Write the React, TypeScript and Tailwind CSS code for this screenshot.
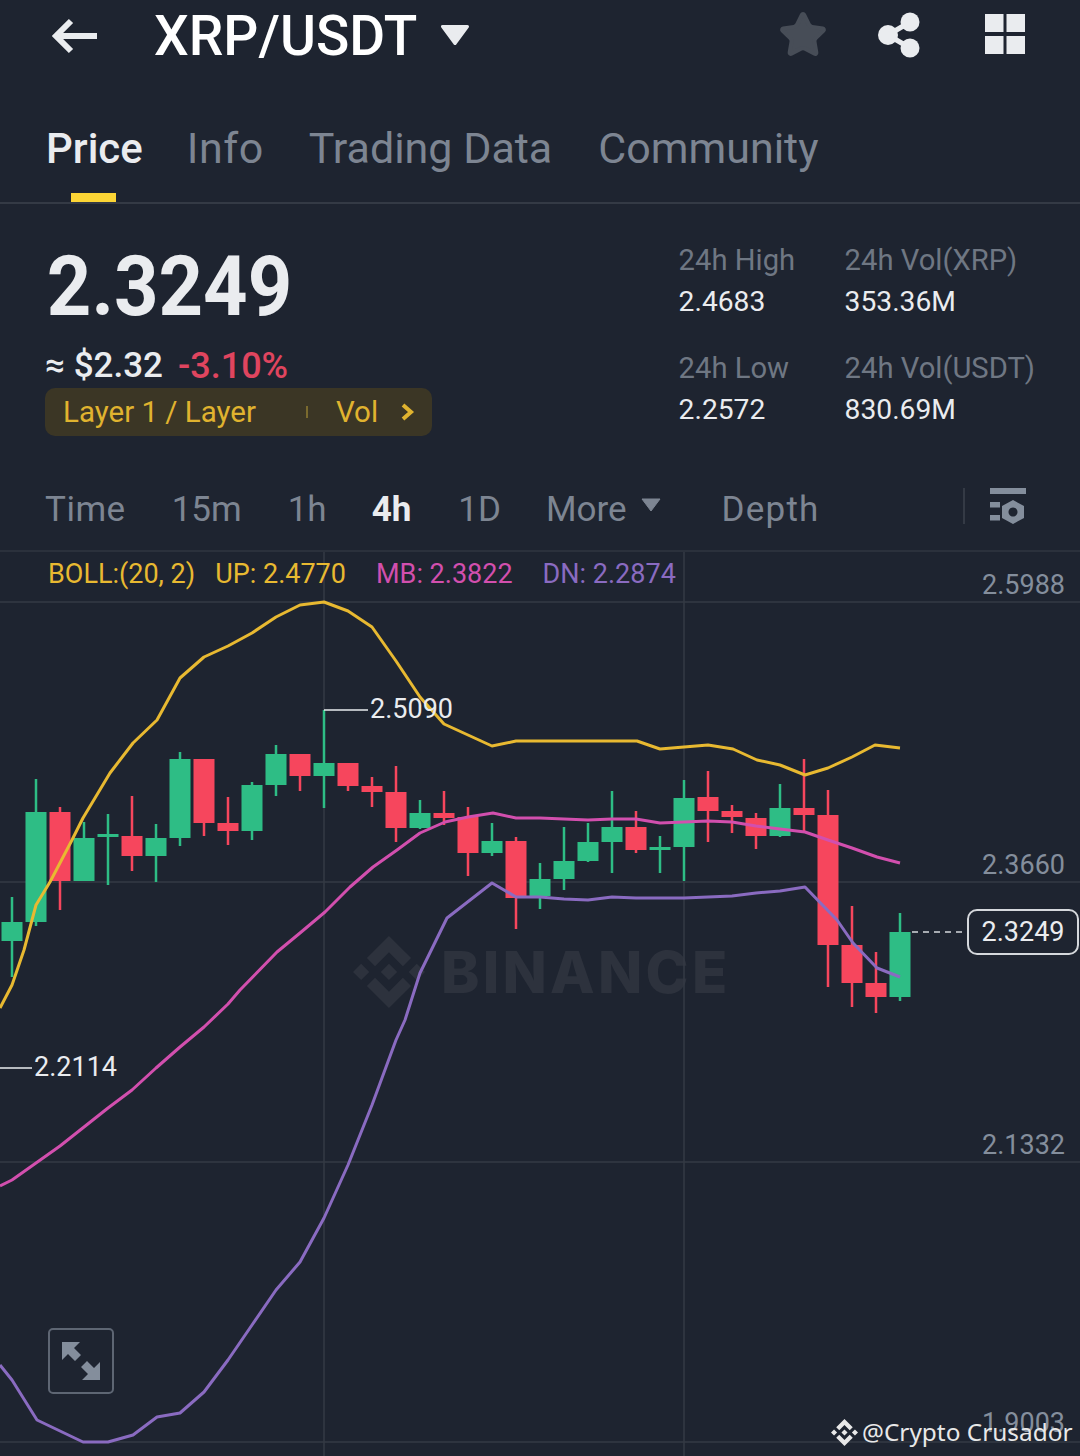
import React from 'react';
import { Star } from 'lucide-react';
import { SiBinance } from 'react-icons/si';

// [x, wickTop, wickBottom, bodyTop, bodyBottom, isUp]
type Candle = [number, number, number, number, number, boolean];

const candles: Candle[] = [
    [12, 897, 977, 922, 941, true],
    [36, 779, 926, 812, 922, true],
    [60, 807, 910, 812, 881, false],
    [84, 822, 881, 838, 881, true],
    [108, 814, 885, 834, 837, true],
    [132, 796, 871, 836, 856, false],
    [156, 824, 882, 838, 856, true],
    [180, 752, 846, 759, 838, true],
    [204, 759, 836, 759, 823, false],
    [228, 797, 845, 823, 831, false],
    [252, 782, 840, 785, 831, true],
    [276, 745, 796, 754, 785, true],
    [300, 754, 791, 754, 776, false],
    [324, 710, 808, 763, 776, true],
    [348, 763, 791, 763, 786, false],
    [372, 777, 807, 786, 792, false],
    [396, 766, 842, 792, 828, false],
    [420, 800, 829, 813, 828, true],
    [444, 791, 825, 813, 818, false],
    [468, 807, 876, 817, 853, false],
    [492, 823, 856, 841, 853, true],
    [516, 837, 929, 841, 898, false],
    [540, 863, 909, 879, 896, true],
    [564, 827, 890, 861, 879, true],
    [588, 823, 862, 842, 861, true],
    [612, 791, 873, 827, 842, true],
    [636, 811, 853, 827, 850, false],
    [660, 836, 873, 847, 850, true],
    [684, 780, 881, 798, 847, true],
    [708, 771, 842, 797, 811, false],
    [732, 805, 833, 811, 817, false],
    [756, 813, 849, 818, 836, false],
    [780, 784, 837, 808, 836, true],
    [804, 759, 833, 808, 815, false],
    [828, 790, 987, 815, 945, false],
    [852, 906, 1007, 945, 983, false],
    [876, 952, 1013, 983, 997, false],
    [900, 913, 1001, 932, 997, true],
];

const upLine = '0,1008 12,985 24,950 36,905 50,882 72,840 83,818 110,773 133,743 157,720 180,678 204,657 228,646 252,633 276,617 300,605 324,602 348,611 372,627 396,661 420,697 444,724 468,735 492,746 516,741 540,741 588,741 637,741 660,749 684,747 708,745 733,749 757,760 780,765 805,775 828,768 852,757 875,745 900,748';
const midLine = '0,1186 12,1180 36,1163 60,1146 84,1127 108,1108 132,1090 156,1068 180,1047 204,1027 228,1004 240,990 277,952 300,933 325,912 350,887 373,867 397,850 420,833 445,822 468,817 493,813 516,818 540,818 564,819 588,820 612,819 636,819 660,823 684,822 708,821 732,822 756,826 780,829 805,832 828,840 852,848 877,857 900,863';
const lowLine = '0,1365 12,1380 37,1420 83,1442 108,1442 133,1435 157,1417 180,1413 204,1392 228,1360 252,1325 276,1290 300,1262 324,1218 348,1165 372,1105 396,1040 405,1020 420,973 447,918 492,883 516,897 540,897 564,899 588,900 612,897 636,898 684,898 708,897 732,896 756,893 780,891 805,887 837,920 853,943 877,968 900,977';

function ChartDrawing() {
    return (
        <svg viewBox="0 552 1080 904" className="absolute inset-0 h-full w-full">
            {[602, 882, 1162, 1442].map((y) => (
                <line key={y} x1="0" x2="1080" y1={y} y2={y} stroke="#343a45" strokeWidth="1.5" />
            ))}
            {[324, 684].map((x) => (
                <line key={x} x1={x} x2={x} y1="552" y2="1456" stroke="#343a45" strokeWidth="1.5" />
            ))}
            {candles.map(([x, wickTop, wickBottom, bodyTop, bodyBottom, isUp]) => {
                const color = isUp ? '#2ebd85' : '#f6465d';
                return (
                    <g key={x}>
                        <rect x={x - 1.25} y={wickTop} width="2.5" height={wickBottom - wickTop} fill={color} />
                        <rect x={x - 10.5} y={bodyTop} width="21" height={bodyBottom - bodyTop} fill={color} />
                    </g>
                );
            })}
            <polyline points={upLine} fill="none" stroke="#e8b931" strokeWidth="3" strokeLinejoin="round" />
            <polyline points={midLine} fill="none" stroke="#d24fae" strokeWidth="3" strokeLinejoin="round" />
            <polyline points={lowLine} fill="none" stroke="#8a6bc1" strokeWidth="3" strokeLinejoin="round" />
            {/* price markers */}
            <polyline points="324,710 368,710" fill="none" stroke="#eaecef" strokeWidth="1.5" />
            <polyline points="0,1068 32,1068" fill="none" stroke="#eaecef" strokeWidth="1.5" />
            <line x1="912" x2="966" y1="932" y2="932" stroke="#d5d8dc" strokeWidth="1.5" strokeDasharray="6 5" />
        </svg>
    );
}

function ShareIcon() {
    return (
        <svg viewBox="0 0 44 46" className="h-[46px] w-[44px]" fill="#eaecef">
            <circle cx="11" cy="23" r="10" />
            <circle cx="33" cy="10" r="9.5" />
            <circle cx="33" cy="36" r="9.5" />
            <path d="M11 23 33 10M11 23 33 36" stroke="#eaecef" strokeWidth="5" />
        </svg>
    );
}

function GridIcon() {
    return (
        <svg viewBox="0 0 40 40" className="h-10 w-10" fill="#eaecef">
            <rect x="0" y="0" width="18.5" height="18" />
            <rect x="21.5" y="0" width="18.5" height="18" />
            <rect x="0" y="22" width="18.5" height="18" />
            <rect x="21.5" y="22" width="18.5" height="18" />
        </svg>
    );
}

function SettingsIcon() {
    return (
        <svg viewBox="0 0 36 36" className="h-9 w-9" fill="#848e9c">
            <rect x="0" y="0" width="36" height="6" />
            <rect x="0" y="14" width="10" height="5.5" />
            <rect x="0" y="27" width="10" height="5.5" />
            <path fillRule="evenodd" d="M23 12 34 18 34 30 23 36 12 30 12 18ZM23 19.5a4.5 4.5 0 1 0 .01 0Z" />
        </svg>
    );
}

function StatBlock({ label, value }: { label: string; value: string }) {
    return (
        <div className="flex flex-col">
            <span className="text-[29.2px] leading-[36px] text-[#6f7783]">{label}</span>
            <span className="mt-[6px] text-[28.2px] leading-[36px] text-[#eaecef]">{value}</span>
        </div>
    );
}

function AxisLabel({ top, children }: { top: string; children: React.ReactNode }) {
    return <span className={`absolute right-[15px] text-[27px] leading-8 text-[#848e9c] ${top}`}>{children}</span>;
}

export default function App() {
    return (
        <div className="flex h-[1456px] w-[1080px] flex-col overflow-hidden bg-[#1e2430] font-['Roboto',sans-serif]">
            {/* header */}
            <div className="flex h-[72px] shrink-0 items-center pl-[51px]">
                <svg viewBox="0 0 48 36" className="h-9 w-12" fill="none" stroke="#eaecef" strokeWidth="6">
                    <path d="M46 18H6M20 3 5 18l15 15" />
                </svg>
                <span className="ml-[55px] text-[55px] font-medium leading-none text-white">XRP/USDT</span>
                <svg viewBox="0 0 28 20" className="ml-[24px] mb-[3px] h-[20px] w-[28px]" fill="#eaecef">
                    <path d="M1.5 1.5h25L14 18.5Z" stroke="#eaecef" strokeLinejoin="round" strokeWidth="3" />
                </svg>
                <div className="ml-auto flex items-center pr-[55px]">
                    <div className="mb-[2px]"><Star size={50} fill="#474d57" stroke="#474d57" strokeWidth={2} /></div>
                    <div className="ml-[49px] mb-[2px]"><ShareIcon /></div>
                    <div className="ml-[64px] mb-[4px]"><GridIcon /></div>
                </div>
            </div>

            {/* tabs */}
            <div className="flex h-[132px] shrink-0 items-end border-b-2 border-[#343a45] pl-[46px]">
                <div className="relative flex h-full items-center pt-[22px] text-[42px] font-medium text-[#eaecef]">
                    Price
                    <div className="absolute bottom-0 left-[25px] h-[9px] w-[45px] bg-[#fcd535]" />
                </div>
                <div className="ml-[44px] flex h-full items-center pt-[22px] text-[43px] tracking-[0.5px] text-[#7d8592]">Info</div>
                <div className="ml-[45px] flex h-full items-center pt-[22px] text-[43px] text-[#7d8592]">Trading Data</div>
                <div className="ml-[46px] flex h-full items-center pt-[22px] text-[43px] text-[#7d8592]">Community</div>
            </div>

            {/* price and stats */}
            <div className="flex h-[266px] shrink-0 pl-[45px] pr-[45px] pt-[37px]">
                <div className="flex flex-col">
                    <span className="origin-left scale-x-[0.925] pl-[2px] pt-[4px] text-[84px] font-bold leading-[84px] text-[#eaecef]">2.3249</span>
                    <div className="mt-[17px] flex items-center font-medium leading-[40px]">
                        <span className="text-[35px] text-[#eaecef]">≈ $2.32</span>
                        <span className="ml-[15px] text-[36px] text-[#e0455f]">-3.10%</span>
                    </div>
                    <div className="mt-[2px] flex h-[48px] w-[387px] items-center rounded-[10px] bg-[#3b3625] pl-[18px] text-[29.5px] text-[#e0b32f]">
                        <span>Layer 1 / Layer</span>
                        <div className="ml-[50px] h-[12px] w-[2px] bg-[#7a6a2e]" />
                        <span className="ml-[28px]">Vol</span>
                        <svg viewBox="0 0 14 18" className="ml-[23px] h-[18px] w-[14px]" fill="none" stroke="#e0b32f" strokeWidth="4">
                            <path d="M2 2l8 7-8 7" />
                        </svg>
                    </div>
                </div>
                <div className="ml-auto mt-[1px] grid h-fit grid-cols-[166px_auto] gap-y-[30px]">
                    <StatBlock label="24h High" value="2.4683" />
                    <StatBlock label="24h Vol(XRP)" value="353.36M" />
                    <StatBlock label="24h Low" value="2.2572" />
                    <StatBlock label="24h Vol(USDT)" value="830.69M" />
                </div>
            </div>

            {/* intervals */}
            <div className="flex h-[82px] shrink-0 items-center border-b-2 border-[#2b313c] pl-[45px] pr-[54px] text-[35px] text-[#7d8592]">
                <span className="tracking-[0.5px]">Time</span>
                <span className="ml-[46px]">15m</span>
                <span className="ml-[46px]">1h</span>
                <span className="ml-[45px] font-bold text-[#eaecef]">4h</span>
                <span className="ml-[47px]">1D</span>
                <span className="ml-[45px]">More</span>
                <svg viewBox="0 0 20 14" className="ml-[14px] mb-[10px] h-[14px] w-[20px]" fill="#7d8592">
                    <path d="M1 1h18L10 13Z" stroke="#7d8592" strokeLinejoin="round" />
                </svg>
                <span className="ml-[61px] tracking-[1.2px]">Depth</span>
                <div className="ml-auto mb-[8px] h-[36px] w-[2px] bg-[#343a45]" />
                <div className="ml-[25px] mb-[8px]"><SettingsIcon /></div>
            </div>

            {/* chart */}
            <div className="relative flex-1">
                <div className="absolute left-[353px] top-[384px] flex items-center text-[#2d323d]">
                    <SiBinance size={72} />
                    <span className="ml-[16px] font-['Inter',sans-serif] text-[58px] font-extrabold leading-none tracking-[3.2px]">BINANCE</span>
                </div>
                <ChartDrawing />
                <div className="absolute left-[48px] top-[4px] flex text-[27px] leading-9">
                    <span className="text-[#e8b931]">BOLL:(20, 2)</span>
                    <span className="ml-[20px] text-[#e8b931]">UP: 2.4770</span>
                    <span className="ml-[30px] text-[#d24fae]">MB: 2.3822</span>
                    <span className="ml-[30px] text-[#8a6bc1]">DN: 2.2874</span>
                </div>
                <AxisLabel top="top-[17px]">2.5988</AxisLabel>
                <AxisLabel top="top-[297px]">2.3660</AxisLabel>
                <AxisLabel top="top-[577px]">2.1332</AxisLabel>
                <AxisLabel top="top-[855px]">1.9003</AxisLabel>
                <span className="absolute left-[370px] top-[141px] text-[27px] leading-8 text-[#eaecef]">2.5090</span>
                <span className="absolute left-[34px] top-[499px] text-[27px] leading-8 text-[#eaecef]">2.2114</span>
                <div className="absolute left-[967px] top-[357px] flex h-[46px] w-[112px] items-center justify-center rounded-[10px] border-2 border-[#d5d8dc] bg-[#1e2430] pt-[1px] text-[27px] text-[#eaecef]">
                    2.3249
                </div>
                <div className="absolute left-[48px] top-[776px] flex h-[66px] w-[66px] items-center justify-center rounded-[5px] border-2 border-[#5e6673]">
                    <svg viewBox="0 0 38 38" className="h-[38px] w-[38px]" fill="#848e9c">
                        <path d="M0 0h18L12 6l7 7-6 6-7-7-6 6Z" />
                        <path d="M38 38H20l6-6-7-7 6-6 7 7 6-6Z" />
                    </svg>
                </div>
                <div className="absolute left-[831px] top-[864px] flex items-center whitespace-nowrap text-[#e8e8e8]">
                    <SiBinance size={27} />
                    <span className="ml-[4px] font-['Noto_Sans',sans-serif] text-[24.4px] leading-8">@Crypto Crusador</span>
                </div>
            </div>
        </div>
    );
}
